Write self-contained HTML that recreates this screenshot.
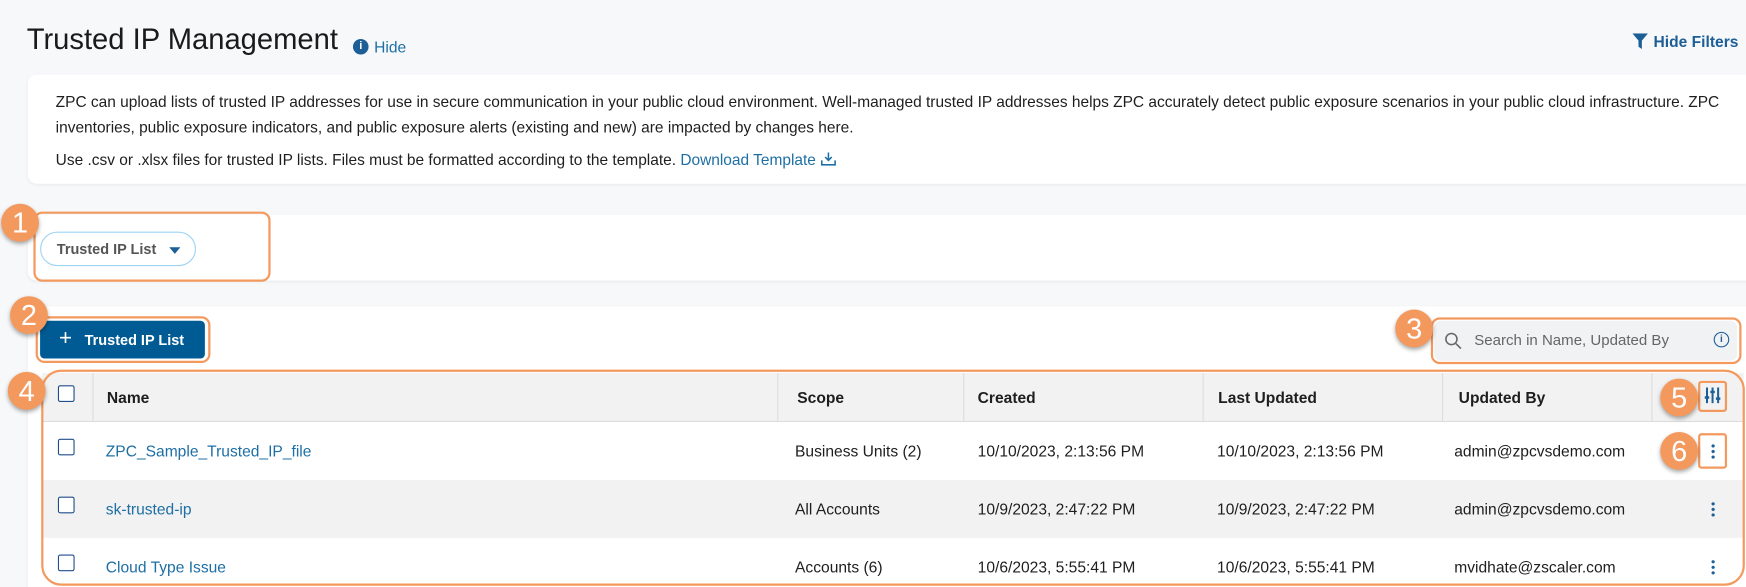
<!DOCTYPE html>
<html style="width:1746px;height:587px;overflow:hidden"><head><meta charset="utf-8"><style>
*{box-sizing:border-box;margin:0;padding:0}
body{width:1746px;height:587px;overflow:hidden;background:#f7f8fa;font-family:"Liberation Sans",sans-serif;color:#1e1e1e;position:relative}
#w{position:absolute;left:0;top:0;width:1568px;height:527px;overflow:hidden;transform:scale(1.1135);transform-origin:0 0}
.a{position:absolute}
.card{position:absolute;background:#fff;border-radius:8px;box-shadow:0 1px 3px rgba(0,0,0,.06)}
.t{font-size:14px;white-space:nowrap}
.badge{position:absolute;width:34px;height:34px;border-radius:50%;background:#f4995e;color:#fff;font-size:26px;text-align:center;line-height:34px;box-shadow:0 2px 4px rgba(0,0,0,.35);z-index:5}
.ob{position:absolute;border:2px solid #f4995e;border-radius:8px;z-index:4}
.cb{position:absolute;width:15px;height:15px;border:1.6px solid #1f4e8c;border-radius:2px;background:#fff}
.link{color:#1d6fa5}
.hd{font-weight:bold;font-size:14px}
.dots{position:absolute;width:3px;height:14px;background:radial-gradient(circle,#1d5e96 1.3px,transparent 1.6px) 0 0/3px 5px repeat-y}
</style></head><body><div id="w">
<div class="a" style="left:24px;top:20px;font-size:26.2px;color:#1a1a1a">Trusted IP Management</div>
<div class="a" style="left:317px;top:35px;width:14px;height:14px;border-radius:50%;background:#1d5e96;color:#fff;font-size:10px;font-weight:bold;text-align:center;line-height:14px">i</div>
<div class="a t link" style="left:336px;top:34px">Hide</div>
<svg class="a" style="left:1466px;top:30px" width="14" height="14" viewBox="0 0 14 14"><path d="M0 0H14L8.5 6.5V14L5.5 12V6.5Z" fill="#1d5e96"/></svg>
<div class="a t link" style="left:1485px;top:29px;font-weight:bold;color:#1d5e96">Hide Filters</div>

<div class="card" style="left:25px;top:67px;width:1550px;height:98px"></div>
<div class="a t" style="left:50px;top:80px;line-height:23px;white-space:normal;width:1500px;font-size:13.9px">ZPC can upload lists of trusted IP addresses for use in secure communication in your public cloud environment. Well-managed trusted IP addresses helps ZPC accurately detect public exposure scenarios in your public cloud infrastructure. ZPC inventories, public exposure indicators, and public exposure alerts (existing and new) are impacted by changes here.</div>
<div class="a t" style="left:50px;top:135px;font-size:13.9px">Use .csv or .xlsx files for trusted IP lists. Files must be formatted according to the template. <span class="link">Download Template</span></div>
<svg class="a" style="left:737px;top:136px" width="14" height="13" viewBox="0 0 14 13"><path d="M7 1V8M4 5L7 8L10 5M1 8V12H13V8" stroke="#1d6fa5" stroke-width="1.4" fill="none"/></svg>

<div class="card" style="left:25px;top:193px;width:1550px;height:59px"></div>
<div class="a" style="left:36px;top:208px;width:140px;height:31px;border:1px solid #9fd3f5;border-radius:16px"></div>
<div class="a t" style="left:51px;top:216px;color:#555;font-weight:bold;font-size:13px">Trusted IP List</div>
<div class="a" style="left:152px;top:222px;width:0;height:0;border-left:5px solid transparent;border-right:5px solid transparent;border-top:6px solid #1d5e96"></div>
<div class="ob" style="left:30px;top:190px;width:213px;height:63px"></div>
<div class="badge" style="left:1px;top:183px">1</div>

<div class="card" style="left:25px;top:275px;width:1550px;height:270px;border-radius:8px 8px 0 0"></div>
<div class="a" style="left:36px;top:288px;width:148px;height:34px;background:#005b94;border-radius:4px"></div>
<div class="a" style="left:53px;top:293px;color:#fff;font-size:20px">+</div>
<div class="a t" style="left:76px;top:298px;color:#fff;font-weight:bold;font-size:13px">Trusted IP List</div>
<div class="ob" style="left:32px;top:284px;width:157px;height:42px"></div>
<div class="badge" style="left:9px;top:266px">2</div>

<div class="a" style="left:1288px;top:288px;width:272px;height:36px;background:#f0f2f4;border-radius:6px"></div>
<svg class="a" style="left:1297px;top:298px" width="16" height="16" viewBox="0 0 16 16"><circle cx="6.5" cy="6.5" r="5" stroke="#666" stroke-width="1.4" fill="none"/><path d="M10.5 10.5L15 15" stroke="#666" stroke-width="1.4"/></svg>
<div class="a t" style="left:1324px;top:298px;color:#666;font-size:13.5px">Search in Name, Updated By</div>
<div class="a" style="left:1539px;top:298px;width:14px;height:14px;border:1.6px solid #1d5e96;border-radius:50%;color:#1d5e96;font-size:9px;font-weight:bold;text-align:center;line-height:11px">i</div>
<div class="ob" style="left:1285px;top:285px;width:279px;height:42px"></div>
<div class="badge" style="left:1253px;top:278px">3</div>

<div class="a" style="left:38px;top:335px;width:1528px;height:44px;background:#f2f2f2;border-bottom:1px solid #ddd"></div>
<div class="a" style="left:83px;top:335px;width:1px;height:44px;background:#ddd"></div>
<div class="a" style="left:698px;top:335px;width:1px;height:44px;background:#ddd"></div>
<div class="a" style="left:865px;top:335px;width:1px;height:44px;background:#ddd"></div>
<div class="a" style="left:1080px;top:335px;width:1px;height:44px;background:#ddd"></div>
<div class="a" style="left:1295px;top:335px;width:1px;height:44px;background:#ddd"></div>
<div class="a" style="left:1483px;top:335px;width:1px;height:44px;background:#ddd"></div>
<div class="cb" style="left:52px;top:346px"></div>
<div class="a hd" style="left:96px;top:349px">Name</div>
<div class="a hd" style="left:716px;top:349px">Scope</div>
<div class="a hd" style="left:878px;top:349px">Created</div>
<div class="a hd" style="left:1094px;top:349px">Last Updated</div>
<div class="a hd" style="left:1310px;top:349px">Updated By</div>
<svg class="a" style="left:1530px;top:347px" width="16" height="16" viewBox="0 0 16 16" fill="none" stroke="#1d5e96" stroke-width="1.8"><path d="M3 1V15M8 1V15M13 1V15"/><path d="M1 10H5M6 5H10M11 11H15" stroke-width="2.2"/></svg>
<div class="ob" style="left:1525px;top:342px;width:26px;height:28px;border-radius:3px"></div>
<div class="badge" style="left:1491px;top:340px">5</div>

<div class="a" style="left:38px;top:431px;width:1528px;height:52px;background:#f2f2f2"></div>
<div class="cb" style="left:52px;top:394px"></div>
<div class="a t link" style="left:95px;top:397px">ZPC_Sample_Trusted_IP_file</div>
<div class="a t" style="left:714px;top:397px">Business Units (2)</div>
<div class="a t" style="left:878px;top:397px">10/10/2023, 2:13:56 PM</div>
<div class="a t" style="left:1093px;top:397px">10/10/2023, 2:13:56 PM</div>
<div class="a t" style="left:1306px;top:397px">admin@zpcvsdemo.com</div>
<div class="dots" style="left:1537px;top:398px"></div>
<div class="ob" style="left:1525px;top:389px;width:26px;height:32px;border-radius:3px"></div>
<div class="badge" style="left:1491px;top:388px">6</div>

<div class="cb" style="left:52px;top:446px"></div>
<div class="a t link" style="left:95px;top:449px">sk-trusted-ip</div>
<div class="a t" style="left:714px;top:449px">All Accounts</div>
<div class="a t" style="left:878px;top:449px">10/9/2023, 2:47:22 PM</div>
<div class="a t" style="left:1093px;top:449px">10/9/2023, 2:47:22 PM</div>
<div class="a t" style="left:1306px;top:449px">admin@zpcvsdemo.com</div>
<div class="dots" style="left:1537px;top:450px"></div>

<div class="cb" style="left:52px;top:498px"></div>
<div class="a t link" style="left:95px;top:501px">Cloud Type Issue</div>
<div class="a t" style="left:714px;top:501px">Accounts (6)</div>
<div class="a t" style="left:878px;top:501px">10/6/2023, 5:55:41 PM</div>
<div class="a t" style="left:1093px;top:501px">10/6/2023, 5:55:41 PM</div>
<div class="a t" style="left:1306px;top:501px">mvidhate@zscaler.com</div>
<div class="dots" style="left:1537px;top:502px"></div>

<div class="ob" style="left:37px;top:332px;width:1530px;height:194px;border-radius:18px"></div>
<div class="badge" style="left:7px;top:334px">4</div>
</div></body></html>
